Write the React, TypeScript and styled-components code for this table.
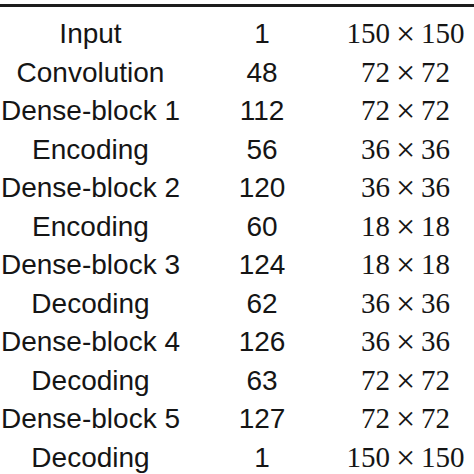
import { createGlobalStyle } from "styled-components";
import styled from "styled-components";

const GlobalStyle = createGlobalStyle`
  html, body {
    margin: 0;
    padding: 0;
    background: #ffffff;
  }
`;

const Table = styled.div`
  width: 474px;
  padding-top: 4px;
  color: #151515;
`;

const Rule = styled.div`
  height: 3px;
  background: #1c1c1c;
  margin-bottom: 7px;
`;

const Row = styled.div`
  display: grid;
  grid-template-columns: 181px 162px 125px;
  align-items: baseline;
  height: 38.5px;
`;

const Cell = styled.div<{ $serif?: boolean }>`
  text-align: center;
  white-space: nowrap;
  line-height: 38.5px;
  font-family: ${(p) =>
    p.$serif
      ? '"Liberation Serif", "Times New Roman", serif'
      : '"Liberation Sans", Arial, sans-serif'};
  font-size: ${(p) => (p.$serif ? "29px" : "28px")};
`;

const Times = styled.span`
  font-size: 34px;
  line-height: 1;
  margin: 0 6px;
  vertical-align: -2px;
`;

interface ILayer {
  name: string;
  channels: number;
  size: number;
}

const layers: ILayer[] = [
  { name: "Input", channels: 1, size: 150 },
  { name: "Convolution", channels: 48, size: 72 },
  { name: "Dense-block 1", channels: 112, size: 72 },
  { name: "Encoding", channels: 56, size: 36 },
  { name: "Dense-block 2", channels: 120, size: 36 },
  { name: "Encoding", channels: 60, size: 18 },
  { name: "Dense-block 3", channels: 124, size: 18 },
  { name: "Decoding", channels: 62, size: 36 },
  { name: "Dense-block 4", channels: 126, size: 36 },
  { name: "Decoding", channels: 63, size: 72 },
  { name: "Dense-block 5", channels: 127, size: 72 },
  { name: "Decoding", channels: 1, size: 150 },
];

function App() {
  return (
    <>
      <GlobalStyle />
      <Table>
        <Rule />
        {layers.map((l, i) => (
          <Row key={i}>
            <Cell>{l.name}</Cell>
            <Cell>{l.channels}</Cell>
            <Cell $serif>
              {l.size}
              <Times>×</Times>
              {l.size}
            </Cell>
          </Row>
        ))}
      </Table>
    </>
  );
}

export default App;
